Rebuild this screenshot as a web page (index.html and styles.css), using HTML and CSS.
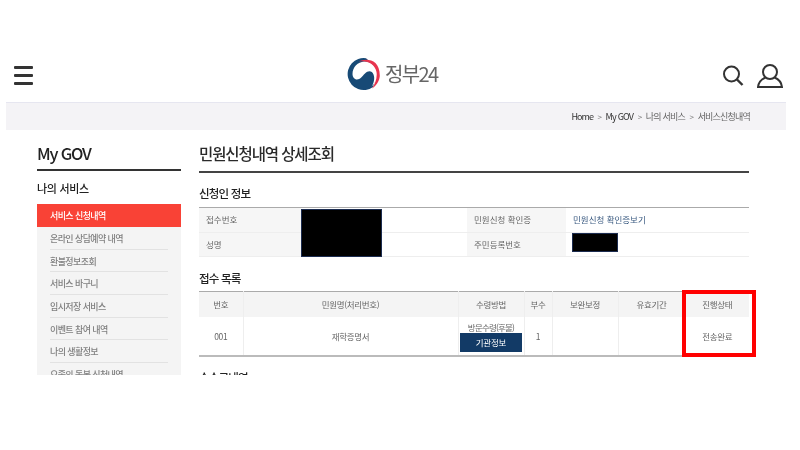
FILE: index.html
```html
<!DOCTYPE html>
<html lang="ko">
<head>
<meta charset="utf-8">
<title>민원신청내역 상세조회</title>
<link rel="stylesheet" href="styles.css">
</head>
<body>
<div class="page">
  <header class="header">
    <div class="burger"><span></span><span></span><span></span></div>
    <div class="logo">
      <svg class="emblem" width="33" height="34" viewBox="0 0 33 34">
        <path d="M19 1.200A16 16 0 1 0 26 30L29 20L27 8Z" fill="#174a76"/>
        <path d="M5.500 17C5.500 10 11 5 17 4.500C24 4 30 9 30 17C30 22 28 26 24.500 30C27 26 28 21 26.500 17.500C25 13.500 21 13.500 18 16.500C15 19.500 13 22.500 10 22.500C7.500 22.500 5.500 20 5.500 17Z" fill="#fff"/>
        <path d="M12 4.500C17 1.500 33 0 32.800 19C32.500 24 29 29 25 31.500C28 27 30.500 21 29.500 15C28 7 20 3 12 4.500Z" fill="#e8344e"/>
      </svg>
      <span class="logo-text">정부24</span>
    </div>
    <div class="tools">
      <svg width="22" height="22" viewBox="0 0 22 22" fill="none" stroke="#333" stroke-width="2"><circle cx="9.500" cy="9" r="7.500"/><path d="M15 14.500l5.500 5.500" stroke-width="2.400"/></svg>
      <svg width="26" height="24" viewBox="0 0 26 24" fill="none" stroke="#333" stroke-width="2"><circle cx="13" cy="8" r="7"/><path d="M8.500 13.500C5 15 1.500 18 1 23H25C24.500 18 21 15 17.500 13.500"/></svg>
    </div>
  </header>

  <nav class="crumbs">
    <span class="dark home">Home</span><i>&gt;</i><span class="dark">My GOV</span><i>&gt;</i><span>나의 서비스</span><i>&gt;</i><span>서비스신청내역</span>
  </nav>

  <div class="main">
    <aside class="side">
      <h2 class="side-title">My GOV</h2>
      <h3 class="side-sub">나의 서비스</h3>
      <ul class="menu">
        <li class="active">서비스 신청내역</li>
        <li>온라인 상담예약 내역</li>
        <li>환불정보조회</li>
        <li>서비스 바구니</li>
        <li>임시저장 서비스</li>
        <li>이벤트 참여 내역</li>
        <li>나의 생활정보</li>
        <li>오종의 동봉 신청내역</li>
      </ul>
    </aside>

    <section class="content">
      <h1 class="title">민원신청내역 상세조회</h1>

      <h3 class="sec first">신청인 정보</h3>
      <div class="info-wrap">
        <table class="info">
          <colgroup><col class="c1"><col class="c2"><col class="c3"><col></colgroup>
          <tr><th>접수번호</th><td></td><th>민원신청 확인증</th><td class="link">민원신청 확인증보기</td></tr>
          <tr><th>성명</th><td></td><th>주민등록번호</th><td></td></tr>
        </table>
        <div class="mask mask-a"></div>
        <div class="mask mask-b"></div>
      </div>

      <h3 class="sec second">접수 목록</h3>
      <div class="list-wrap">
        <table class="list">
          <colgroup><col class="l1"><col class="l2"><col class="l3"><col class="l4"><col class="l5"><col class="l6"><col></colgroup>
          <tr class="head"><th>번호</th><th>민원명(처리번호)</th><th>수령방법</th><th>부수</th><th>보완보정</th><th>유효기간</th><th>진행상태</th></tr>
          <tr class="body">
            <td>001</td><td>재학증명서</td>
            <td class="recv"><div>방문수령(후불)</div><div class="btn">기관정보</div></td>
            <td>1</td><td></td><td></td><td>전송완료</td>
          </tr>
        </table>
        <div class="highlight"></div>
      </div>

      <h3 class="sec third">수수료내역</h3>
    </section>
  </div>
</div>
</body>
</html>
```
FILE: styles.css
```css
* { box-sizing: border-box; }
html, body { margin: 0; padding: 0; background: #fff; }
body { width: 800px; height: 450px; overflow: hidden; font-family: "Noto Sans CJK KR", "Noto Sans", sans-serif; color: #666; }
h1, h2, h3, ul { margin: 0; padding: 0; font-weight: 500; }
ul { list-style: none; }

.page { padding-top: 50px; height: 375px; overflow: hidden; filter: blur(0.3px); }

.header { height: 52px; position: relative; display: flex; align-items: center; justify-content: space-between; padding: 0 17px 0 14px; }
.burger { width: 19px; display: flex; flex-direction: column; gap: 5px; margin-top: -1px; }
.burger span { display: block; height: 3px; background: #333; border-radius: 1px; }
.logo { position: absolute; left: 347px; top: 7px; display: flex; align-items: center; gap: 5px; }
.logo-text { font-size: 20px; line-height: 34px; letter-spacing: -1.6px; color: #666; font-weight: 400; margin-top: -1px; }
.tools { display: flex; align-items: center; gap: 13px; }

.crumbs { height: 28px; margin: 0 14px 0 6px; background: #f4f3f6; border-top: 1px solid #e6e6f0; display: flex; align-items: center; justify-content: flex-end; padding-right: 36px; font-size: 9px; letter-spacing: -0.8px; color: #666; }
.crumbs .dark { color: #333; }
.crumbs .home { letter-spacing: -1px; }
.crumbs i { font-style: normal; font-size: 8px; margin: 0 4.500px; color: #777; }

.main { display: flex; padding-left: 37px; }

.side { width: 144px; margin-right: 18px; }
.side-title { font-size: 16.500px; line-height: 26px; height: 41px; padding-top: 10px; padding-bottom: 3px; color: #222; border-bottom: 2px solid #333; letter-spacing: -1.2px; font-weight: 500; }
.side-sub { font-size: 11px; line-height: 16px; margin-top: 9px; color: #222; letter-spacing: -0.3px; font-weight: 500; }
.menu { margin-top: 8px; background: #f4f4f4; }
.menu li { height: 22.700px; padding-top: 1px; line-height: 21px; margin: 0 13px; font-size: 9px; color: #808080; border-bottom: 1px solid #e2e2e2; letter-spacing: -0.6px; }
.menu li.active { height: 23px; line-height: 22px; margin: 0; padding-left: 13px; background: #f94236; color: #fff; border: 0; }

.content { width: 550px; }
.title { font-size: 15.500px; line-height: 24px; height: 43px; padding-top: 11px; padding-bottom: 6px; color: #2a2a2a; border-bottom: 2px solid #444; font-weight: 500; letter-spacing: -1.1px; }
.sec { font-size: 11.500px; line-height: 16px; color: #222; letter-spacing: -0.8px; font-weight: 500; }
.sec.first { margin-top: 12px; }
.sec.second { margin-top: 13px; }
.sec.third { margin-top: 12px; }

.info-wrap, .list-wrap { position: relative; }
.info-wrap { margin-top: 6px; }
table { border-collapse: collapse; table-layout: fixed; width: 550px; font-size: 8.500px; font-weight: 400; }
.info { border-top: 1px solid #aaa; border-bottom: 1px solid #aaa; }
.info th, .info td { height: 24.500px; padding: 0 0 1px 7px; text-align: left; font-weight: 400; border-bottom: 1px solid #eee; }
.info th { background: #f6f6f6; color: #666; }
.c1 { width: 102px; }
.c2 { width: 166px; }
.c3 { width: 99px; }
.info .link { color: #3a5a80; }

.mask { position: absolute; background: #000; border: 1px solid #1c2c50; }
.mask-a { left: 102px; top: 2px; width: 81px; height: 48px; }
.mask-b { left: 373px; top: 26px; width: 46px; height: 19px; }

.list-wrap { margin-top: 5px; }
.list { border-top: 1px solid #aaa; border-bottom: 2px solid #bbb; text-align: center; letter-spacing: -0.35px; }
.list th, .list td { padding: 0; font-weight: 400; border-left: 1px solid #eee; text-align: center; color: #666; }
.list th:first-child, .list td:first-child { border-left: 0; }
.list .head th { height: 25px; background: #f4f4f4; color: #666; }
.list .body td { height: 39px; }
.l1 { width: 44px; }
.l2 { width: 215px; }
.l3 { width: 66px; }
.l4 { width: 28px; }
.l5 { width: 66px; }
.l6 { width: 67px; }
.list .recv { line-height: 12px; padding-top: 2px; letter-spacing: -0.8px; }
.list .btn { width: 62px; height: 19px; line-height: 19px; margin: 0 auto; background: #123a66; color: #fff; letter-spacing: -0.2px; }

.highlight { position: absolute; left: 483px; top: -1px; width: 74px; height: 67px; border: 4px solid #f00; }
```
